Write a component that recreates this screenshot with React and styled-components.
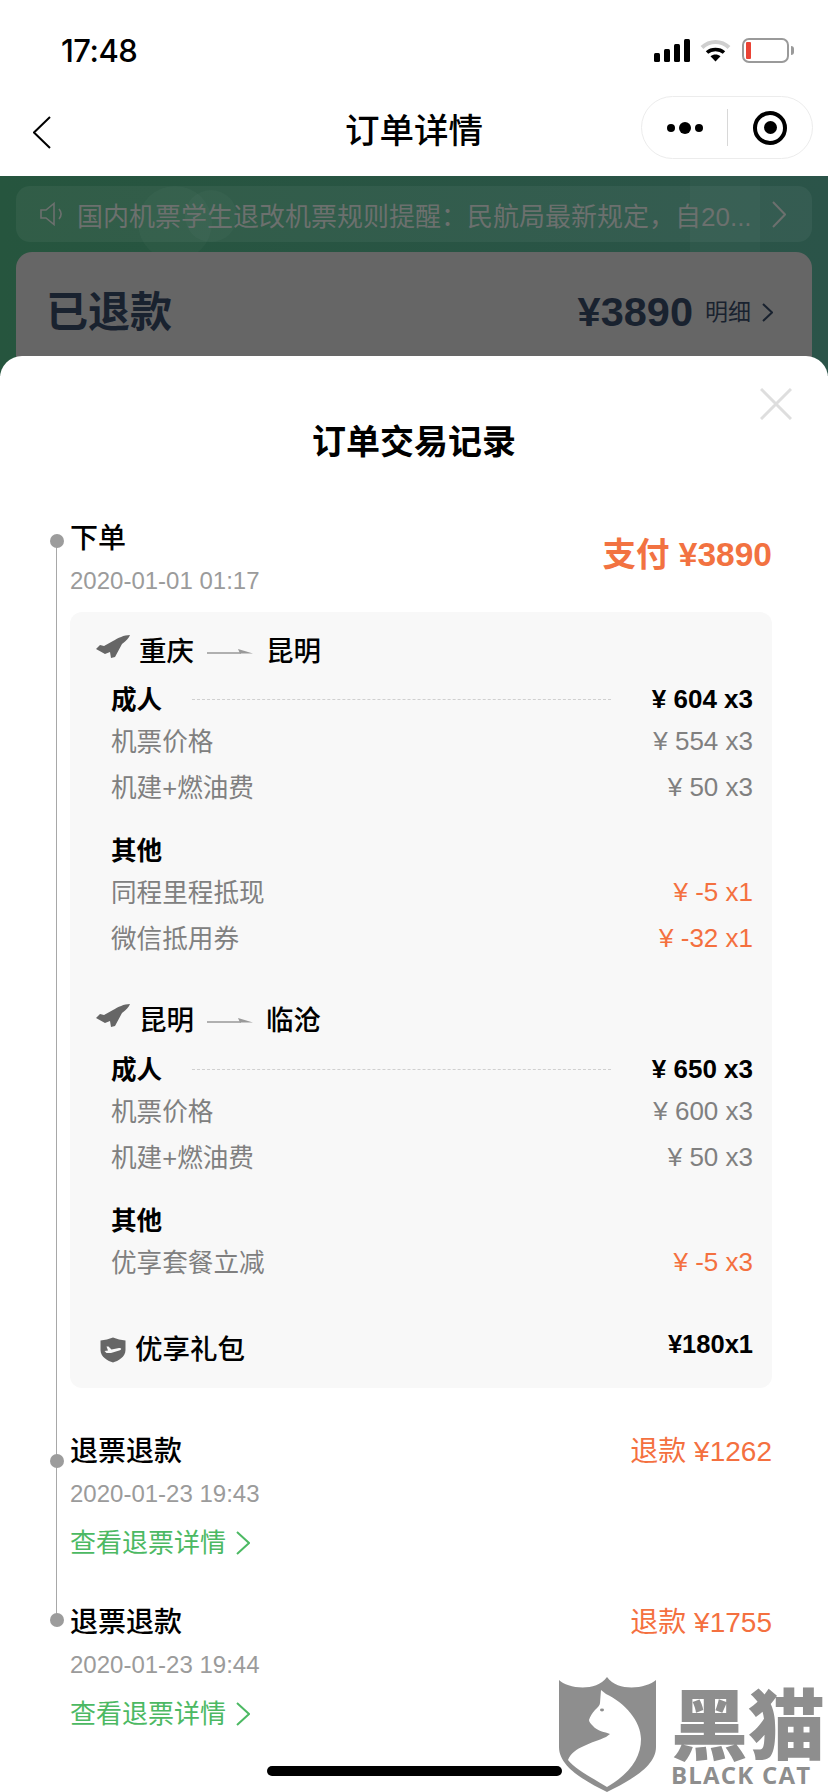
import React from 'react'
import styled, { createGlobalStyle } from 'styled-components'

const GlobalStyle = createGlobalStyle`
  html, body {
    margin: 0;
    padding: 0;
    background: #fff;
    font-family: "Liberation Sans", "Noto Sans CJK SC", sans-serif;
  }
`

const Page = styled.div`
  position: relative;
  width: 828px;
  height: 1792px;
  overflow: hidden;
  background: #fff;
`

const StatusBar = styled.div`
  height: 88px;
  display: flex;
  align-items: center;
  justify-content: space-between;
  padding: 12px 33px 0 61px;
  box-sizing: border-box;
`

const Clock = styled.div`
  font-size: 31px;
  font-weight: 500;
  color: #000;
  font-family: Inter, "Liberation Sans", sans-serif;
  letter-spacing: -0.5px;
`

const StatusIcons = styled.div`
  display: flex;
  align-items: center;
  gap: 10px;
`

const Signal = styled.div`
  display: flex;
  align-items: flex-end;
  gap: 4px;
  height: 23px;
`

const SignalBar = styled.span`
  width: 6px;
  height: ${p => p.$h}px;
  background: #000;
  border-radius: 1.5px;
`

const Battery = styled.div`
  position: relative;
  width: 47px;
  height: 25px;
  margin-left: 1px;
  margin-right: 6px;
  box-sizing: border-box;
  border: 2px solid #9a9a9a;
  border-radius: 7px;
  padding: 2px;
  &::after {
    content: "";
    position: absolute;
    right: -7px;
    top: 6px;
    width: 3px;
    height: 9px;
    background: #9a9a9a;
    border-radius: 0 3px 3px 0;
  }
`

const BatteryLevel = styled.div`
  width: 5px;
  height: 100%;
  background: #ea4335;
  border-radius: 1px;
`

const NavBar = styled.div`
  position: relative;
  height: 88px;
  display: flex;
  align-items: center;
  justify-content: center;
  padding-bottom: 8px;
  box-sizing: border-box;
`

const NavTitle = styled.div`
  font-size: 34.5px;
  font-weight: 500;
  color: #000;
`

const BackButton = styled.div`
  position: absolute;
  left: 33px;
  top: 28px;
  line-height: 0;
  transform: scaleX(-1);
`

const Capsule = styled.div`
  position: absolute;
  left: 641px;
  top: 8px;
  width: 172px;
  height: 63px;
  box-sizing: border-box;
  border: 1px solid #ececec;
  border-radius: 32px;
  display: flex;
  align-items: center;
`

const CapsuleDots = styled.div`
  flex: 0 0 85px;
  display: flex;
  justify-content: center;
  align-items: center;
  gap: 4px;
`

const CapsuleDot = styled.span`
  width: ${p => p.$size}px;
  height: ${p => p.$size}px;
  border-radius: 50%;
  background: #000;
`

const CapsuleDivider = styled.div`
  width: 1px;
  height: 37px;
  background: #d8d8d8;
`

const CapsuleTarget = styled.div`
  flex: 1;
  display: flex;
  justify-content: center;
`

const TargetRing = styled.div`
  width: 34px;
  height: 34px;
  box-sizing: border-box;
  border: 4px solid #000;
  border-radius: 50%;
  display: flex;
  align-items: center;
  justify-content: center;
  &::after {
    content: "";
    width: 13px;
    height: 13px;
    border-radius: 50%;
    background: #000;
  }
`

const Backdrop = styled.div`
  position: relative;
  height: 200px;
  overflow: hidden;
  background: linear-gradient(90deg, #26553e, #2b5449);
  padding: 10px 16px 0;
  box-sizing: border-box;
`

const BackdropShape = styled.div`
  position: absolute;
  left: ${p => p.$x}px;
  top: ${p => p.$y}px;
  width: ${p => p.$w}px;
  height: ${p => p.$h}px;
  border-radius: ${p => (p.$round ? '50%' : '0')};
  background: rgba(255, 255, 255, 0.025);
`

const Notice = styled.div`
  position: relative;
  height: 56px;
  box-sizing: border-box;
  padding: 0 26px 0 24px;
  background: rgba(255, 255, 255, 0.05);
  border-radius: 14px;
  display: flex;
  align-items: center;
  color: #6c706e;
`

const NoticeText = styled.div`
  flex: 1;
  min-width: 0;
  margin-left: 13px;
  font-size: 26px;
  white-space: nowrap;
`

const StatusCard = styled.div`
  position: relative;
  height: 200px;
  margin-top: 10px;
  background: #666;
  border-radius: 16px;
  display: flex;
  align-items: flex-start;
  padding: 32px 39px 0 30px;
  box-sizing: border-box;
  color: #19222f;
`

const StatusLabel = styled.div`
  font-size: 42px;
  line-height: 58px;
  font-weight: 600;
`

const StatusPrice = styled.div`
  margin-left: auto;
  font-size: 41.5px;
  line-height: 56px;
  font-weight: 700;
`

const StatusDetail = styled.div`
  margin-left: 12px;
  font-size: 23px;
  line-height: 56px;
`

const StatusChevron = styled.div`
  margin-left: 11px;
  height: 56px;
  display: flex;
  align-items: center;
`

const Sheet = styled.div`
  position: relative;
  margin-top: -20px;
  height: 1436px;
  background: #fff;
  border-radius: 22px 22px 0 0;
  padding: 62px 56px 0 70px;
  box-sizing: border-box;
`

const CloseButton = styled.div`
  position: absolute;
  top: 32px;
  left: 760px;
  line-height: 0;
`

const SheetTitle = styled.div`
  margin-left: -70px;
  margin-right: -56px;
  text-align: center;
  font-size: 34px;
  line-height: 48px;
  font-weight: 600;
  color: #000;
`

const Timeline = styled.div`
  position: relative;
  margin-top: 53px;
`

const Rail = styled.div`
  position: absolute;
  left: -14px;
  top: 22px;
  bottom: 113px;
  width: 1px;
  background: #a8a8a8;
`

const TimelineEvent = styled.div`
  position: relative;
  margin-top: ${p => p.$top || 0}px;
  &::before {
    content: "";
    position: absolute;
    left: -20px;
    top: ${p => p.$dot}px;
    width: 14px;
    height: 14px;
    border-radius: 50%;
    background: #9c9c9c;
  }
`

const EventHead = styled.div`
  display: flex;
  justify-content: space-between;
  align-items: ${p => (p.$centered ? 'center' : 'flex-start')};
`

const EventName = styled.div`
  font-size: 28px;
  line-height: 40px;
  font-weight: 500;
  color: #000;
`

const EventDate = styled.div`
  margin-top: 6px;
  font-size: 24px;
  line-height: 32px;
  color: #9b9b9b;
`

const PayAmount = styled.div`
  margin-top: -14px;
  font-size: 33.5px;
  font-weight: 600;
  color: #f27241;
`

const RefundAmount = styled.div`
  font-size: 28px;
  line-height: 40px;
  color: #f4703f;
`

const DetailLink = styled.div`
  margin-top: 15px;
  display: flex;
  align-items: center;
  gap: 10px;
  font-size: 26px;
  line-height: 36px;
  color: #4cb963;
`

const Card = styled.div`
  margin-top: 15px;
  background: #f8f8f8;
  border-radius: 12px;
  padding: 20px 19px 20px 26px;
`

const Route = styled.div`
  display: flex;
  align-items: center;
  height: 36px;
  margin-top: ${p => p.$top || 0}px;
  font-size: 27.5px;
  font-weight: 500;
  color: #000;
`

const RouteCity = styled.span`
  margin-left: ${p => p.$gap}px;
  margin-top: -2px;
`

const PlaneMark = styled.svg`
  flex: none;
  width: 34px;
  height: 24px;
  margin-top: -6px;
  fill: #666;
`

const RouteArrowMark = styled.svg`
  flex: none;
  width: 46px;
  height: 8px;
  margin: 4px 0 0 13px;
`

const Rows = styled.div`
  padding-left: 15px;
  margin-top: ${p => p.$top || 0}px;
`

const Row = styled.div`
  display: flex;
  align-items: center;
  height: 42px;
  margin-top: ${p => p.$top || 0}px;
  font-size: 25.6px;
  font-weight: ${p => (p.$strong ? 600 : 400)};
  color: ${p => (p.$strong ? '#000' : '#808080')};
`

const RowLabel = styled.span`
  margin-top: -4px;
`

const RowLeader = styled.div`
  flex: 0 0 419px;
  margin-left: 30px;
  border-top: 1px dashed #d0d0d0;
`

const RowAmount = styled.div`
  margin-left: auto;
  font-size: 26px;
  color: ${p => (p.$discount ? '#f4703f' : 'inherit')};
`

const PackageRow = styled.div`
  display: flex;
  align-items: flex-start;
  height: 36px;
  margin-top: 49px;
  padding-left: 4px;
`

const ShieldMark = styled.svg`
  flex: none;
  width: 26px;
  height: 26px;
  margin-top: 5px;
`

const PackageName = styled.div`
  margin-left: 9px;
  font-size: 27.5px;
  line-height: 36px;
  font-weight: 500;
  color: #000;
`

const PackagePrice = styled.div`
  margin-left: auto;
  font-size: 25.5px;
  line-height: 24px;
  font-weight: 700;
  color: #000;
`

const HomeBar = styled.div`
  position: absolute;
  left: 267px;
  top: 1766px;
  width: 295px;
  height: 10px;
  border-radius: 5px;
  background: #000;
`

const Watermark = styled.div`
  position: absolute;
  left: 559px;
  top: 1677px;
  display: flex;
  color: #8e8e8e;
`

const WatermarkWords = styled.div`
  margin-left: 15px;
  display: flex;
  flex-direction: column;
`

const WatermarkName = styled.div`
  font-family: "Noto Sans CJK SC", sans-serif;
  font-size: 77px;
  line-height: 76px;
  margin-top: 6px;
  font-weight: 900;
`

const WatermarkLatin = styled.div`
  margin-top: 4px;
  font-size: 24px;
  line-height: 24px;
  font-weight: 700;
  letter-spacing: 1.2px;
  white-space: nowrap;
  font-family: "Open Sans", sans-serif;
`

const Chevron = ({ w = 14, h = 24, color = '#000', stroke = 2 }) => (
  <svg width={w} height={h} viewBox={`0 0 ${w} ${h}`} fill="none">
    <path d={`M1 1L${w - 1} ${h / 2}L1 ${h - 1}`} stroke={color} strokeWidth={stroke} />
  </svg>
)

const Plane = () => (
  <PlaneMark viewBox="0 0 34 24">
    <path d="M34 0C28 0 22 3 17 6L8 11L4 10L0 14L9 19L14 17L15 23L19 22L26 9C30 6 33 3 34 0Z" />
  </PlaneMark>
)

const RouteArrow = () => (
  <RouteArrowMark viewBox="0 0 46 8">
    <path d="M0 5H34" stroke="#999" strokeWidth="1.5" />
    <path d="M31 1L46 5.5H33Z" fill="#999" />
  </RouteArrowMark>
)

const ShieldBadge = () => (
  <ShieldMark viewBox="0 0 26 26">
    <path d="M13 0.5C17 2 21 3 25.5 3.5V13C25.5 20 18 24 13 25.5C8 24 0.5 20 0.5 13V3.5C5 3 9 2 13 0.5Z" fill="#666" />
    <path d="M4.5 14L8 13.5L6.5 9.5H8.5L11.5 12.5L19 11C21.5 10.8 22 12.2 20 13.2L11 16H6.5Z" fill="#f8f8f8" />
  </ShieldMark>
)

const Wifi = () => (
  <svg width="31" height="23" viewBox="0 0 31 23" fill="none">
    <path d="M2 8.5C9.5 1.2 21.5 1.2 29 8.5" stroke="#cfcfcf" strokeWidth="4" />
    <path d="M7 13.5C11.5 9.5 19.5 9.5 24 13.5" stroke="#000" strokeWidth="3.6" />
    <path d="M15.5 22.5L10.5 17.2C13.5 14.8 17.5 14.8 20.5 17.2Z" fill="#000" />
  </svg>
)

const Speaker = () => (
  <svg width="24" height="24" viewBox="0 0 24 24" fill="none" stroke="#6c706e" strokeWidth="1.6">
    <path d="M1 8H6L14 1.5V22.5L6 16H1Z" />
    <path d="M19 7C21.5 10 21.5 14 19 17" />
  </svg>
)

const Shield = () => (
  <svg width="97" height="115" viewBox="0 0 97 115">
    <path d="M0 3C8 11 36 16 48 0C60 16 88 11 97 3V70C97 90 70 104 48 115C26 104 0 90 0 70Z" fill="#8e8e8e" />
    <path
      d="M42 13L47 17C66 26 82 44 82 62C82 80 72 96 48 110C32 100 16 92 9 83C14 70 34 66 47 60L51 57C46 55 38 54 34 49C32 47 30 45 30 43C31 40 33 36 36 33C39 30 41 28 41 26Z"
      fill="#fff"
    />
    <ellipse cx="43" cy="33" rx="2" ry="1.4" fill="#8e8e8e" />
  </svg>
)

const PriceRows = ({ top, head, rows, extras }) => (
  <Rows $top={top}>
    <Row $strong>
      <RowLabel>成人</RowLabel>
      <RowLeader />
      <RowAmount>{head}</RowAmount>
    </Row>
    {rows.map(([label, amount], i) => (
      <Row key={label} $top={i > 0 ? 4 : 0}>
        <RowLabel>{label}</RowLabel>
        <RowAmount>{amount}</RowAmount>
      </Row>
    ))}
    <Row $strong $top={21}>
      <RowLabel>其他</RowLabel>
    </Row>
    {extras.map(([label, amount], i) => (
      <Row key={label} $top={i > 0 ? 4 : 0}>
        <RowLabel>{label}</RowLabel>
        <RowAmount $discount>{amount}</RowAmount>
      </Row>
    ))}
  </Rows>
)

const RefundEvent = ({ top, dot, date, amount }) => (
  <TimelineEvent $top={top} $dot={dot}>
    <EventHead>
      <EventName>退票退款</EventName>
      <RefundAmount>退款 ¥{amount}</RefundAmount>
    </EventHead>
    <EventDate>{date}</EventDate>
    <DetailLink>
      查看退票详情
      <Chevron w={14} h={24} color="#4cb963" />
    </DetailLink>
  </TimelineEvent>
)

const App = () => (
  <Page>
    <GlobalStyle />
    <StatusBar>
      <Clock>17:48</Clock>
      <StatusIcons>
        <Signal>
          <SignalBar $h={9} />
          <SignalBar $h={13} />
          <SignalBar $h={18} />
          <SignalBar $h={23} />
        </Signal>
        <Wifi />
        <Battery>
          <BatteryLevel />
        </Battery>
      </StatusIcons>
    </StatusBar>

    <NavBar>
      <BackButton>
        <Chevron w={18} h={33} />
      </BackButton>
      <NavTitle>订单详情</NavTitle>
      <Capsule>
        <CapsuleDots>
          <CapsuleDot $size={8} />
          <CapsuleDot $size={12} />
          <CapsuleDot $size={8} />
        </CapsuleDots>
        <CapsuleDivider />
        <CapsuleTarget>
          <TargetRing />
        </CapsuleTarget>
      </Capsule>
    </NavBar>

    <Backdrop>
      <BackdropShape $round $x={138} $y={10} $w={74} $h={74} />
      <BackdropShape $round $x={185} $y={14} $w={52} $h={52} />
      <BackdropShape $x={690} $y={0} $w={70} $h={76} />
      <Notice>
        <Speaker />
        <NoticeText>国内机票学生退改机票规则提醒：民航局最新规定，自20...</NoticeText>
        <Chevron w={14} h={27} color="#6c706e" />
      </Notice>
      <StatusCard>
        <StatusLabel>已退款</StatusLabel>
        <StatusPrice>¥3890</StatusPrice>
        <StatusDetail>明细</StatusDetail>
        <StatusChevron>
          <Chevron w={11} h={19} color="#19222f" />
        </StatusChevron>
      </StatusCard>
    </Backdrop>

    <Sheet>
      <CloseButton>
        <svg width="32" height="32" viewBox="0 0 32 32" fill="none">
          <path d="M1 1L31 31M31 1L1 31" stroke="#dedede" strokeWidth="3" />
        </svg>
      </CloseButton>
      <SheetTitle>订单交易记录</SheetTitle>

      <Timeline>
        <Rail />
        <TimelineEvent $dot={15}>
          <EventHead $centered>
            <div>
              <EventName>下单</EventName>
              <EventDate>2020-01-01 01:17</EventDate>
            </div>
            <PayAmount>支付 ¥3890</PayAmount>
          </EventHead>
          <Card>
            <Route>
              <Plane />
              <RouteCity $gap={9}>重庆</RouteCity>
              <RouteArrow />
              <RouteCity $gap={13}>昆明</RouteCity>
            </Route>
            <PriceRows
              top={10}
              head="¥ 604 x3"
              rows={[['机票价格', '¥ 554 x3'], ['机建+燃油费', '¥ 50 x3']]}
              extras={[['同程里程抵现', '¥ -5 x1'], ['微信抵用券', '¥ -32 x1']]}
            />
            <Route $top={42}>
              <Plane />
              <RouteCity $gap={9}>昆明</RouteCity>
              <RouteArrow />
              <RouteCity $gap={13}>临沧</RouteCity>
            </Route>
            <PriceRows
              top={11}
              head="¥ 650 x3"
              rows={[['机票价格', '¥ 600 x3'], ['机建+燃油费', '¥ 50 x3']]}
              extras={[['优享套餐立减', '¥ -5 x3']]}
            />
            <PackageRow>
              <ShieldBadge />
              <PackageName>优享礼包</PackageName>
              <PackagePrice>¥180x1</PackagePrice>
            </PackageRow>
          </Card>
        </TimelineEvent>

        <RefundEvent top={44} dot={22} date="2020-01-23 19:43" amount="1262" />
        <RefundEvent top={42} dot={10} date="2020-01-23 19:44" amount="1755" />
      </Timeline>
    </Sheet>

    <HomeBar />
    <Watermark>
      <Shield />
      <WatermarkWords>
        <WatermarkName>黑猫</WatermarkName>
        <WatermarkLatin>BLACK CAT</WatermarkLatin>
      </WatermarkWords>
    </Watermark>
  </Page>
)

export default App
